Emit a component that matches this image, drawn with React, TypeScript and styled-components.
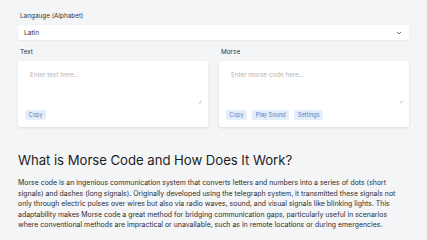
import React from "react";
import styled, { createGlobalStyle } from "styled-components";

const GlobalStyle = createGlobalStyle`
  html, body {
    margin: 0;
    padding: 0;
    background: #f4f5f7;
    font-family: "Inter", "Noto Sans", sans-serif;
    color: #2b2b2b;
  }
`

const Page = styled.main`
  padding: 12px 18px 0 18px;
  display: flex;
  flex-direction: column;
`

const Label = styled.label`
  display: block;
  font-size: 6.4px;
  color: #333;
  padding-left: 2px;
  margin-bottom: 5px;
`

const SelectBox = styled.div`
  height: 15px;
  background: white;
  border-radius: 2px;
  box-shadow: 0 0.5px 2px rgba(0, 0, 0, 0.06);
  display: flex;
  align-items: center;
  justify-content: space-between;
  padding: 0 7px 0 6px;
  font-size: 6.6px;
  color: #333;
  margin-bottom: 8px;
`

const Panels = styled.div`
  display: grid;
  grid-template-columns: 1fr 1fr;
  gap: 11px;
`

const Panel = styled.section``

const Card = styled.div`
  margin-top: 1px;
  height: 66px;
  background: white;
  border-radius: 2px;
  box-shadow: 0 1px 3px rgba(0, 0, 0, 0.1);
  padding: 6px 6px 0 7px;
  box-sizing: border-box;
  display: flex;
  flex-direction: column;
`

const Area = styled.div`
  position: relative;
  height: 37px;
  padding: 4px 5px;
  box-sizing: border-box;
  font-size: 6.3px;
  color: #b3b3b3;
`

const Grip = styled.svg`
  position: absolute;
  right: 0;
  bottom: 0;
`

const Buttons = styled.div`
  display: flex;
  gap: 5px;
  margin-top: 6px;
`

const Btn = styled.button`
  all: unset;
  height: 10px;
  padding: 0 3.5px;
  background: #e4eefb;
  border-radius: 2px;
  font-family: "Inter", "Noto Sans", sans-serif;
  font-size: 5.7px;
  line-height: 10px;
  color: #5a7db8;
`

const Heading = styled.h2`
  margin: 25px 0 0 0;
  font-size: 13.2px;
  font-weight: 400;
  color: #1e1e1e;
  letter-spacing: -0.05px;
`

const Body = styled.p`
  margin: 10px 0 0 0;
  font-size: 6.95px;
  line-height: 10.5px;
  color: #2e2e2e;
  white-space: nowrap;
`

const Chevron = () => (
  <svg width="6" height="4" viewBox="0 0 6 4">
    <path d="M1 1 L3 3 L5 1" fill="none" stroke="#555" strokeWidth="0.8" />
  </svg>
)

const ResizeGrip = () => (
  <Grip width="4" height="4" viewBox="0 0 4 4">
    <path d="M3.5 0.5 L0.5 3.5 M3.5 2 L2 3.5" stroke="#999" strokeWidth="0.5" />
  </Grip>
)

const App: React.FunctionComponent = () => {
  return (
    <>
      <GlobalStyle />
      <Page>
        <Label>Langauge (Alphabet)</Label>
        <SelectBox>
          <span>Latin</span>
          <Chevron />
        </SelectBox>
        <Panels>
          <Panel>
            <Label>Text</Label>
            <Card>
              <Area>Enter text here...<ResizeGrip /></Area>
              <Buttons>
                <Btn>Copy</Btn>
              </Buttons>
            </Card>
          </Panel>
          <Panel>
            <Label>Morse</Label>
            <Card>
              <Area>Enter morse code here...<ResizeGrip /></Area>
              <Buttons>
                <Btn>Copy</Btn>
                <Btn>Play Sound</Btn>
                <Btn>Settings</Btn>
              </Buttons>
            </Card>
          </Panel>
        </Panels>
        <Heading>What is Morse Code and How Does It Work?</Heading>
        <Body>
          Morse code is an ingenious communication system that converts letters and numbers into a series of dots (short<br />
          signals) and dashes (long signals). Originally developed using the telegraph system, it transmitted these signals not<br />
          only through electric pulses over wires but also via radio waves, sound, and visual signals like blinking lights. This<br />
          adaptability makes Morse code a great method for bridging communication gaps, particularly useful in scenarios<br />
          where conventional methods are impractical or unavailable, such as in remote locations or during emergencies.
        </Body>
      </Page>
    </>
  )
}

export default App
